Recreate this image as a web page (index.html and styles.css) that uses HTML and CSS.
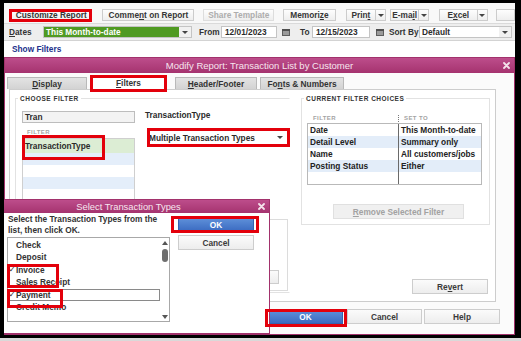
FILE: index.html
```html
<!DOCTYPE html>
<html lang="en">
<head>
    <meta charset="UTF-8">
    <title>Modify Report: Transaction List by Customer</title>
    <link rel="stylesheet" href="styles.css">
</head>
<body>
<div class="screen">
    <div class="report-window">
        <div class="toolbar">
            <button class="tb-btn w-customize mark mark-customize">Custo<u>m</u>ize Report</button>
            <button class="tb-btn w-comment">Comme<u>n</u>t on Report</button>
            <button class="tb-btn w-share" disabled>Share Template</button>
            <button class="tb-btn w-memorize">Memori<u>z</u>e</button>
            <div class="tb-split w-print"><span class="tb-label">Prin<u>t</u></span><span class="tb-drop"><i class="caret"></i></span></div>
            <div class="tb-split w-email"><span class="tb-label">E-ma<u>i</u>l</span><span class="tb-drop"><i class="caret"></i></span></div>
            <div class="tb-split w-excel"><span class="tb-label">E<u>x</u>cel</span><span class="tb-drop"><i class="caret"></i></span></div>
            <div class="tb-split w-more"></div>
        </div>

        <div class="date-bar">
            <span class="bar-label lbl-dates"><u>D</u>ates</span>
            <div class="dd dd-dates"><span class="dd-value">This Month-to-date</span><span class="dd-btn"><i class="caret"></i></span></div>
            <span class="bar-label lbl-from">From</span>
            <div class="date-field w-date1">12/01/2023</div>
            <svg class="cal cal-1" width="8" height="7" viewBox="0 0 8 7"><rect x="0.5" y="0.5" width="7" height="6" fill="#9a9a9a" stroke="#5e5e5e"/><rect x="0" y="0" width="8" height="2" fill="#4f4f4f"/></svg>
            <span class="bar-label lbl-to">To</span>
            <div class="date-field w-date2">12/15/2023</div>
            <svg class="cal cal-2" width="8" height="7" viewBox="0 0 8 7"><rect x="0.5" y="0.5" width="7" height="6" fill="#9a9a9a" stroke="#5e5e5e"/><rect x="0" y="0" width="8" height="2" fill="#4f4f4f"/></svg>
            <span class="bar-label lbl-sort">Sort By</span>
            <div class="dd dd-sort"><span class="dd-value">Default</span><span class="dd-btn"><i class="caret"></i></span></div>
        </div>

        <div class="show-filters">Show Filters</div>
    </div>

    <!-- Modify Report dialog -->
    <div class="dialog modify">
        <div class="titlebar">
            <span></span>
            <span class="title">Modify Report: Transaction List by Customer</span>
            <svg class="close" width="7" height="7" viewBox="0 0 7 7"><path d="M1 1L6 6M6 1L1 6" stroke="#f4e2eb" stroke-width="1.8" stroke-linecap="round"/></svg>
        </div>

        <div class="tabs">
            <div class="tab w-tab-display"><u>D</u>isplay</div>
            <div class="tab active w-tab-filters mark mark-tab"><u>F</u>ilters</div>
            <div class="tab w-tab-header"><u>H</u>eader/Footer</div>
            <div class="tab w-tab-fonts">Fo<u>n</u>ts &amp; Numbers</div>
        </div>

        <div class="tab-panel">
            <div class="group choose">
                <div class="group-title">Choose Filter</div>
                <div class="choose-body">
                    <div class="choose-list">
                        <div class="search">Tran</div>
                        <div class="col-head">Filter</div>
                        <div class="filter-list">
                            <div class="fl-row picked mark mark-row">TransactionType</div>
                            <div class="fl-row alt"></div>
                            <div class="fl-row"></div>
                            <div class="fl-row alt"></div>
                            <div class="fl-row"></div>
                            <div class="fl-row alt"></div>
                        </div>
                    </div>
                    <div class="choose-detail">
                        <div class="field-name">TransactionType</div>
                        <div class="select-multi mark mark-select">
                            <span>Multiple Transaction Types</span>
                            <i class="caret"></i>
                        </div>
                        <div class="detail-box">
                            <button class="btn detail-btn">Specify</button>
                        </div>
                    </div>
                </div>
            </div>

            <div class="right-col">
                <div class="group current">
                    <div class="group-title">Current Filter Choices</div>
                    <div class="table-head">
                        <span class="th-filter">Filter</span>
                        <span class="th-sep"></span>
                        <span>Set To</span>
                    </div>
                    <div class="filter-table">
                        <div class="ft-row"><span class="ft-name">Date</span><span>This Month-to-date</span></div>
                        <div class="ft-row alt"><span class="ft-name">Detail Level</span><span>Summary only</span></div>
                        <div class="ft-row"><span class="ft-name">Name</span><span>All customers/jobs</span></div>
                        <div class="ft-row alt"><span class="ft-name">Posting Status</span><span>Either</span></div>
                        <div class="ft-row"><span class="ft-name"></span><span></span></div>
                    </div>
                    <button class="btn remove-btn" disabled><u>R</u>emove Selected Filter</button>
                </div>
                <button class="btn revert-btn">Re<u>v</u>ert</button>
            </div>
        </div>

        <div class="dialog-buttons">
            <button class="btn primary dlg-btn mark mark-ok-main">OK</button>
            <button class="btn dlg-btn btn-cancel">Cancel</button>
            <button class="btn dlg-btn btn-help">Help</button>
        </div>
    </div>

    <!-- Select Transaction Types dialog -->
    <div class="dialog select-types">
        <div class="titlebar small">
            <span></span>
            <span class="title">Select Transaction Types</span>
            <svg class="close" width="7" height="7" viewBox="0 0 7 7"><path d="M1 1L6 6M6 1L1 6" stroke="#f4e2eb" stroke-width="1.8" stroke-linecap="round"/></svg>
        </div>
        <div class="sel-body">
            <div class="sel-main">
                <div class="sel-text">Select the Transaction Types from the<br>list, then click OK.</div>
                <div class="sel-list">
                    <div class="sel-items">
                        <div class="sel-item"><span class="check"></span>Check</div>
                        <div class="sel-item"><span class="check"></span>Deposit</div>
                        <div class="sel-item mark mark-invoice"><span class="check">✓</span>Invoice</div>
                        <div class="sel-item"><span class="check"></span>Sales Receipt</div>
                        <div class="sel-item focused mark mark-payment"><span class="check">✓</span>Payment</div>
                        <div class="sel-item"><span class="check"></span>Credit Memo</div>
                    </div>
                    <div class="scroll">
                        <i class="arrow-up"></i>
                        <i class="thumb"></i>
                        <i class="arrow-down"></i>
                    </div>
                </div>
            </div>
            <div class="sel-actions">
                <button class="btn primary sel-btn mark mark-ok-sel">OK</button>
                <button class="btn sel-btn">Cancel</button>
            </div>
        </div>
    </div>

    <div class="taskbar"></div>
</div>
</body>
</html>
```

FILE: styles.css
```css
* {
    margin: 0;
    padding: 0;
    box-sizing: border-box;
}

body {
    background: #000;
    font-family: 'Liberation Sans', Arial, sans-serif;
    font-size: 8.3px;
    font-weight: bold;
    color: #2b2b2b;
}

button {
    font: inherit;
    color: inherit;
}

.screen {
    position: relative;
    width: 521px;
    height: 341px;
    overflow: hidden;
    background: #000;
}

.report-window {
    margin: 3px 0 0 4px;
    width: 511px;
    height: 332px;
    background: #fff;
}

.taskbar {
    margin-top: 3px;
    height: 3px;
    background: #d9d9d9;
}

/* annotation boxes */
.mark {
    position: relative;
}

.mark::after {
    content: "";
    position: absolute;
    border: 3px solid #e3000b;
    pointer-events: none;
    z-index: 20;
}

.mark-customize::after { top: -1px; bottom: -2px; left: -3px; right: -2px; }
.mark-tab::after { top: -1px; bottom: -2px; left: -2px; right: -2px; }
.mark-row::after { top: -4px; left: -1px; width: 77px; height: 19px; }
.mark-select::after { top: -2px; bottom: -2px; left: -1px; right: -2px; }
.mark-ok-main::after { top: -1px; bottom: -4px; left: -4px; right: -5px; }
.mark-ok-sel::after { top: -2px; bottom: -2px; left: -8px; right: -6px; }
.mark-invoice::after { top: 0; left: -1px; width: 46px; height: 18px; }
.mark-payment::after { top: 0; left: -1px; width: 50px; height: 13px; }

.caret {
    display: inline-block;
    width: 0;
    height: 0;
    border-left: 3px solid transparent;
    border-right: 3px solid transparent;
    border-top: 3px solid #444;
}

/* toolbar */
.toolbar {
    display: flex;
    height: 21px;
    padding: 6px 0 0 7px;
    background: #f8f8f8;
    border-bottom: 1px solid #dadada;
}

.tb-btn,
.tb-split {
    height: 12px;
    border: 1px solid #cccccc;
    background: linear-gradient(#fdfdfd, #eeeeee);
    color: #363636;
    display: flex;
    align-items: center;
    justify-content: center;
}

.tb-btn:disabled {
    color: #adadad;
    border-color: #dddddd;
}

.tb-split {
    justify-content: flex-start;
}

.tb-label {
    flex: 1;
    text-align: center;
}

.tb-drop {
    width: 10px;
    height: 100%;
    border-left: 1px solid #cccccc;
    display: flex;
    align-items: center;
    justify-content: center;
}

.w-customize { width: 83px; }
.w-comment { width: 95px; margin-left: 11px; }
.w-share { width: 73px; margin-left: 9px; }
.w-memorize { width: 54px; margin-left: 9px; }
.w-print { width: 42px; margin-left: 10px; }
.w-email { width: 40px; margin-left: 4px; }
.w-excel { width: 50px; margin-left: 10px; }
.w-more { width: 20px; margin-left: 8px; }

/* dates bar */
.date-bar {
    display: flex;
    align-items: center;
    height: 17px;
    background: #eeeeee;
    border-bottom: 1px solid #d3d3d3;
}

.bar-label {
    color: #333;
}

.lbl-dates { width: 34px; margin-left: 5px; }
.lbl-from { width: 22px; margin-left: 7px; }
.lbl-to { width: 12px; margin-left: 10px; }
.lbl-sort { width: 30px; margin-left: 5px; }

.dd {
    display: flex;
    height: 12px;
    border: 1px solid #c4c4c4;
    background: #fff;
}

.dd-value {
    flex: 1;
    padding-left: 2px;
    line-height: 10px;
}

.dd-btn {
    width: 12px;
    display: flex;
    align-items: center;
    justify-content: center;
    background: #f1f1f1;
}

.dd-dates {
    width: 149px;
}

.dd-dates .dd-value {
    background: #4f9a22;
    color: #fff;
}

.dd-sort {
    width: 93px;
}

.date-field {
    height: 12px;
    border: 1px solid #c4c4c4;
    background: #fff;
    padding-left: 3px;
    line-height: 10px;
}

.w-date1 { width: 56px; }
.w-date2 { width: 58px; }

.cal-1 { margin-left: 5px; }
.cal-2 { margin-left: 6px; }

.show-filters {
    height: 16px;
    line-height: 16px;
    padding-left: 8px;
    color: #22328c;
}

/* dialogs */
.dialog {
    position: absolute;
    background: #fbfbfb;
    border: 1px solid #a2326c;
}

.modify {
    left: 4px;
    top: 57px;
    width: 511px;
    height: 278px;
}

.titlebar {
    display: grid;
    grid-template-columns: 1fr auto 1fr;
    align-items: center;
    height: 15px;
    background: linear-gradient(#bd4d8b, #a5336f);
    color: #f7e6ef;
    font-weight: normal;
    font-size: 9.5px;
}

.titlebar .close {
    justify-self: end;
    margin-right: 4px;
}

.titlebar.small {
    height: 13px;
    font-size: 9.4px;
}

.titlebar.small .title {
    margin-right: 16px;
}

.tabs {
    display: flex;
    align-items: flex-end;
    height: 16px;
    padding-left: 2px;
}

.tab {
    height: 12px;
    border: 1px solid #b9b9b9;
    border-bottom: none;
    background: linear-gradient(#e3e3e3, #d3d3d3);
    display: flex;
    align-items: center;
    justify-content: center;
    color: #333;
}

.tab.active {
    height: 15px;
    margin-bottom: -1px;
    background: #fff;
    border-color: #cdcdcd;
    z-index: 1;
}

.w-tab-display { width: 80px; }
.w-tab-filters { width: 75px; margin-left: 4px; }
.w-tab-header { width: 82px; margin-left: 9px; }
.w-tab-fonts { width: 84px; margin-left: 3px; }

.tab-panel {
    margin-left: 4px;
    width: 487px;
    height: 213px;
    border: 1px solid #cdcdcd;
    background: #fff;
    display: grid;
    grid-template-columns: 275px 189px;
    column-gap: 11px;
    align-items: start;
    padding: 8px 0 0 5px;
}

.group {
    border: 1px solid #e2e2e2;
}

.group-title {
    width: fit-content;
    margin: -4px 0 0 2px;
    padding: 0 2px;
    background: #fff;
    font-size: 6.5px;
    line-height: 7px;
    letter-spacing: 0.5px;
    text-transform: uppercase;
    color: #333;
}

.choose {
    height: 195px;
    border-right-color: #fff;
}

.choose-body {
    display: grid;
    grid-template-columns: 113px 144px;
    column-gap: 10px;
    padding-left: 6px;
}

.search {
    margin-top: 9px;
    height: 12px;
    border: 1px solid #bdbdbd;
    background: #f3f3f3;
    padding-left: 2px;
    line-height: 10px;
}

.col-head {
    margin-top: 5px;
    height: 9px;
    line-height: 9px;
    padding-left: 5px;
    font-size: 6px;
    letter-spacing: 0.4px;
    text-transform: uppercase;
    color: #a3a3a3;
}

.filter-list {
    margin-top: 1px;
    height: 152px;
    border: 1px solid #cfcfcf;
}

.fl-row {
    height: 12px;
    line-height: 12px;
    padding-left: 2px;
}

.fl-row.picked {
    height: 14px;
    line-height: 14px;
    background: #dcedd4;
}

.fl-row.alt {
    background: #e4eefa;
}

.field-name {
    margin-top: 8px;
    line-height: 10px;
}

.select-multi {
    margin: 9px 0 0 2px;
    width: 142px;
    height: 17px;
    border: 1px solid #cfcfcf;
    background: #fff;
    display: flex;
    align-items: center;
    justify-content: space-between;
    padding: 0 5px 0 1px;
}

.detail-box {
    margin: 73px 1px 0 0;
    height: 72px;
    border: 1px solid #dcdcdc;
    display: flex;
    justify-content: flex-end;
}

.btn {
    border: 1px solid #cdcdcd;
    background: linear-gradient(#fbfbfb, #ededed);
    color: #3a3a3a;
    display: flex;
    align-items: center;
    justify-content: center;
}

.btn:disabled {
    color: #a2a2a2;
}

.btn.primary {
    background: linear-gradient(#5f91da, #3b6bc1);
    border-color: #3562ae;
    color: #fff;
}

.detail-btn {
    margin: 50px 8px 0 0;
    width: 60px;
    height: 14px;
}

.right-col {
    height: 196px;
    display: flex;
    flex-direction: column;
}

.current {
    height: 127px;
}

.table-head {
    display: flex;
    align-items: center;
    margin-top: 11px;
    height: 10px;
    padding-left: 11px;
    font-size: 6px;
    letter-spacing: 0.4px;
    text-transform: uppercase;
    color: #a3a3a3;
}

.th-filter {
    width: 85px;
}

.th-sep {
    width: 6px;
    height: 7px;
    border-left: 1px dotted #777;
}

.filter-table {
    margin-left: 5px;
    width: 175px;
    border: 1px solid #b9b9b9;
}

.ft-row {
    display: flex;
    height: 12px;
    line-height: 12px;
    color: #222;
}

.ft-row.alt {
    background: #e3edf9;
}

.ft-row span {
    padding-left: 2px;
}

.ft-name {
    width: 91px;
    border-right: 1px solid #6a6a6a;
}

.remove-btn {
    margin: 19px 0 0 31px;
    width: 131px;
    height: 15px;
    background: #f0f0f0;
    border-color: #e0e0e0;
}

.revert-btn {
    margin: auto 2px 0 auto;
    width: 76px;
    height: 15px;
}

.dialog-buttons {
    display: flex;
    margin-top: 7px;
    padding-left: 263px;
}

.dlg-btn {
    width: 75px;
    height: 15px;
}

.btn-cancel { margin-left: 4px; }
.btn-help { margin-left: 2px; width: 76px; }

/* Select Transaction Types */
.select-types {
    left: 4px;
    top: 199px;
    width: 266px;
    height: 135px;
    z-index: 5;
    background: #fff;
    border-left: none;
}

.sel-body {
    display: flex;
    padding: 1px 0 0 3px;
}

.sel-main {
    width: 163px;
}

.sel-text {
    height: 22px;
    padding-left: 1px;
    line-height: 11px;
    white-space: nowrap;
    color: #333;
}

.sel-list {
    margin-top: 1px;
    height: 85px;
    border: 1px solid #a8a8a8;
    background: #fff;
    display: flex;
}

.sel-items {
    flex: 1;
    padding-top: 1px;
}

.sel-item {
    display: flex;
    height: 12.4px;
    line-height: 12.4px;
    color: #333;
}

.sel-item.focused {
    box-shadow: inset 0 0 0 1px #8a8a8a;
}

.check {
    width: 8px;
    font-family: 'DejaVu Sans', sans-serif;
    font-size: 8px;
    font-weight: normal;
    text-align: center;
    color: #222;
}

.scroll {
    width: 9px;
    display: flex;
    flex-direction: column;
    align-items: center;
    padding-top: 3px;
}

.arrow-up {
    width: 0;
    height: 0;
    border-left: 3px solid transparent;
    border-right: 3px solid transparent;
    border-bottom: 4px solid #555;
}

.thumb {
    margin-top: 4px;
    width: 6px;
    height: 13px;
    border-radius: 3px;
    background: #6e6e6e;
}

.arrow-down {
    margin-top: auto;
    margin-bottom: 2px;
    width: 0;
    height: 0;
    border-left: 3px solid transparent;
    border-right: 3px solid transparent;
    border-top: 4px solid #555;
}

.sel-actions {
    margin-left: 8px;
    width: 76px;
    padding-top: 3px;
    display: flex;
    flex-direction: column;
    gap: 3px;
}

.sel-btn {
    height: 15px;
}
```
